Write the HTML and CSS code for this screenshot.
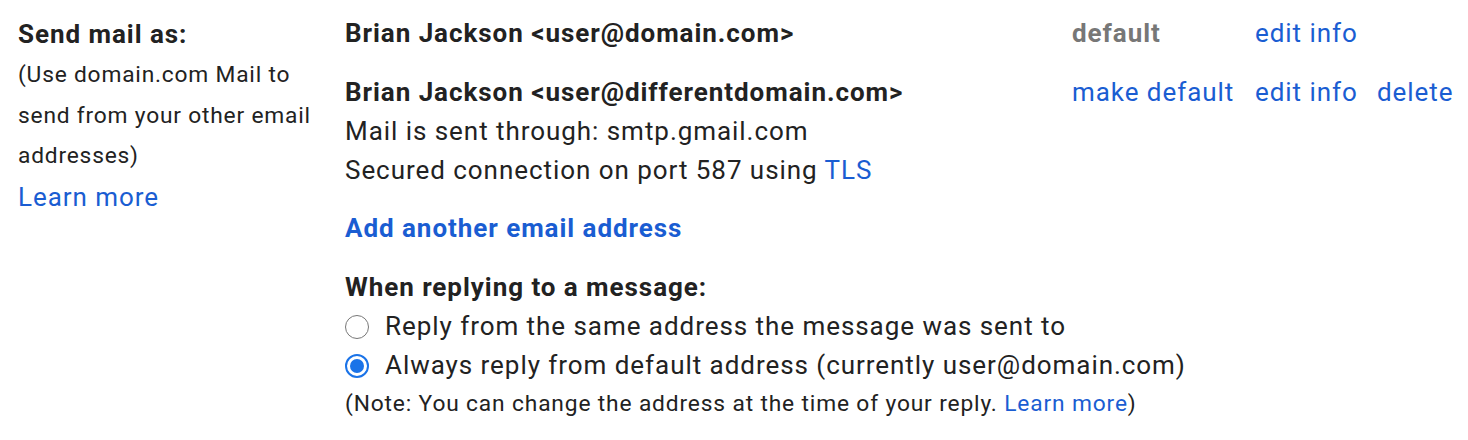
FILE: index.html
```html
<!DOCTYPE html>
<html>
<head>
<meta charset="utf-8">
<link rel="stylesheet" href="styles.css">
</head>
<body>
<div class="settings">
  <div class="label-col">
    <div class="label-title">Send mail as:</div>
    <div class="label-desc">(Use domain.com Mail to send from your other email addresses)</div>
    <a class="link" href="#">Learn more</a>
  </div>
  <div class="content-col">
    <div class="addr-grid">
      <div class="addr-row first">
        <div class="addr"><div class="addr-name">Brian Jackson &lt;user@domain.com&gt;</div></div>
        <div class="status">default</div>
        <div class="action"><a class="link" href="#">edit info</a></div>
        <div class="action"></div>
      </div>
      <div class="addr-row">
        <div class="addr">
          <div class="addr-name">Brian Jackson &lt;user@differentdomain.com&gt;</div>
          <div>Mail is sent through: smtp.gmail.com</div>
          <div>Secured connection on port 587 using <a class="link" href="#">TLS</a></div>
        </div>
        <div class="action"><a class="link" href="#">make default</a></div>
        <div class="action"><a class="link" href="#">edit info</a></div>
        <div class="action"><a class="link" href="#">delete</a></div>
      </div>
    </div>
    <a class="add-link" href="#">Add another email address</a>
    <div class="reply">
      <div class="reply-title">When replying to a message:</div>
      <label class="radio-row"><span class="radio"></span>Reply from the same address the message was sent to</label>
      <label class="radio-row"><span class="radio checked"></span>Always reply from default address (currently user@domain.com)</label>
      <div class="note">(Note: You can change the address at the time of your reply. <a class="link" href="#">Learn more</a>)</div>
    </div>
  </div>
</div>
</body>
</html>
```
FILE: styles.css
```css
html, body {
  margin: 0;
  background: #fff;
}
body {
  padding: 14px 0 0 18px;
  font-family: Roboto, "Noto Sans", Arial, sans-serif;
  font-size: 26px;
  letter-spacing: 0.95px;
  color: #222;
  line-height: 39px;
}
.link {
  color: #1a5dd2;
  text-decoration: none;
}
.settings {
  display: flex;
}
.label-col {
  width: 327px;
  flex: none;
  display: flex;
  flex-direction: column;
  align-items: flex-start;
}
.label-title {
  font-weight: 700;
  line-height: 41px;
}
.label-desc {
  font-size: 22.75px;
  letter-spacing: 0.8px;
  line-height: 40.5px;
  width: 310px;
}
.label-col .link {
  line-height: 40px;
}
.content-col {
  display: flex;
  flex-direction: column;
  align-items: flex-start;
}
.addr-row {
  display: grid;
  grid-template-columns: 727px 183px 122px auto;
}
.addr-row.first {
  margin-bottom: 20px;
}
.addr-name {
  font-weight: 700;
}
.status {
  font-weight: 700;
  color: #777;
}
.add-link {
  margin-top: 19px;
  color: #1a5dd2;
  font-weight: 700;
  text-decoration: none;
}
.reply {
  margin-top: 20px;
  display: flex;
  flex-direction: column;
}
.reply-title {
  font-weight: 700;
}
.radio-row {
  display: flex;
  align-items: center;
}
.radio {
  width: 24px;
  height: 24px;
  border: 1.5px solid #777;
  border-radius: 50%;
  margin-right: 16px;
  box-sizing: border-box;
  flex: none;
  position: relative;
}
.radio.checked {
  border: 2px solid #1a73e8;
}
.radio.checked::after {
  content: "";
  position: absolute;
  left: 3px;
  top: 3px;
  width: 14px;
  height: 14px;
  border-radius: 50%;
  background: #1a73e8;
}
.note {
  font-size: 22.75px;
  letter-spacing: 0.85px;
  line-height: 38px;
}
```
